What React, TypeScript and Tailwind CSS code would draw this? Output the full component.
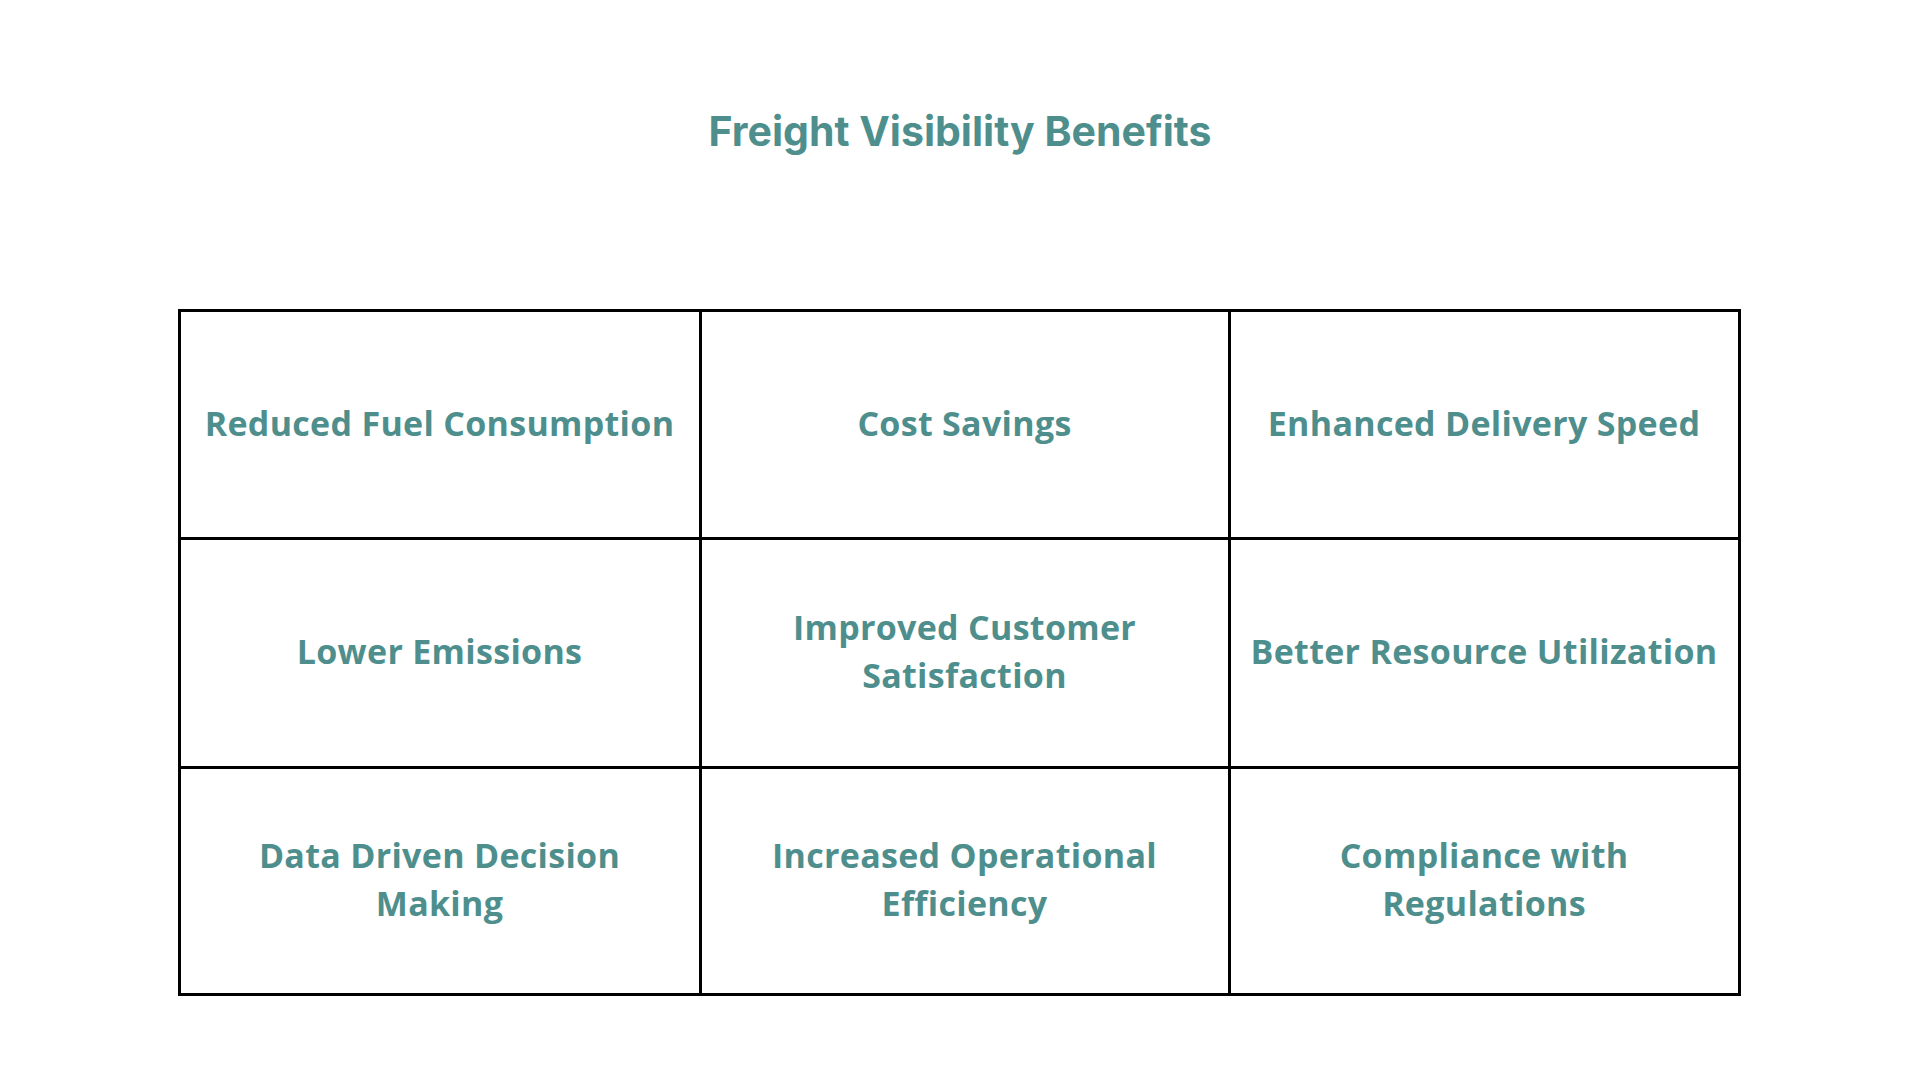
import React from 'react';

// each benefit is written out line by line, as in the slide
const benefits: string[][] = [
  ['Reduced Fuel Consumption'],
  ['Cost Savings'],
  ['Enhanced Delivery Speed'],
  ['Lower Emissions'],
  ['Improved Customer', 'Satisfaction'],
  ['Better Resource Utilization'],
  ['Data Driven Decision', 'Making'],
  ['Increased Operational', 'Efficiency'],
  ['Compliance with', 'Regulations'],
];

const App: React.FC = () => {
  return (
    <div className="w-full h-[1080px] bg-white flex flex-col items-center">
      <h1
        className="mt-[103px] h-[56px] leading-[56px] text-[41px] font-bold text-[#4e8f8d]"
        style={{ fontFamily: 'Inter, "Noto Sans", sans-serif' }}
      >
        Freight Visibility Benefits
      </h1>

      <div className="mt-[150px] ml-[-2px] grid grid-cols-[518px_526px_507px] grid-rows-[225px_226px_224px] gap-[3px] p-[3px] bg-black">
        {benefits.map((lines, i) => (
          <div key={i} className="bg-white flex flex-col items-center justify-center pb-[4px]">
            {lines.map((line, j) => (
              <span
                key={j}
                className="whitespace-nowrap text-center text-[34px] leading-[48px] tracking-[0.3px] font-bold text-[#4e8f8d]"
                style={{ fontFamily: '"Open Sans", "Noto Sans", sans-serif' }}
              >
                {line}
              </span>
            ))}
          </div>
        ))}
      </div>
    </div>
  );
};

export default App;
